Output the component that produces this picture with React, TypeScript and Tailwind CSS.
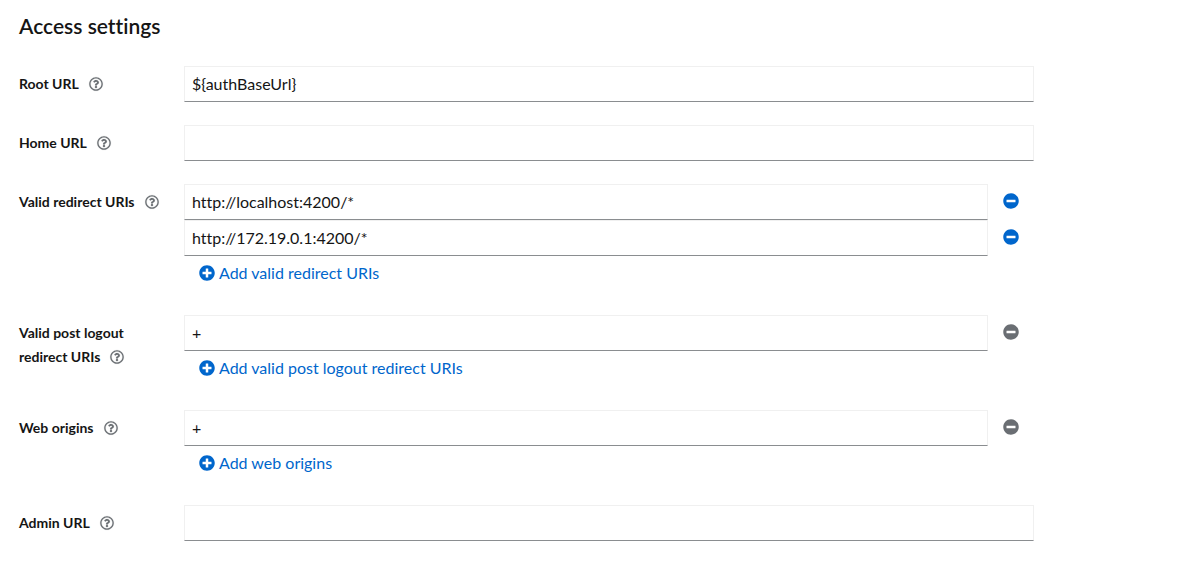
import { useState } from "react"
import { FaMinusCircle, FaPlusCircle, FaRegQuestionCircle } from "react-icons/fa"

const inputStyle =
    "block h-9 w-full min-w-0 border border-[#f0f0f0] border-b-[#8a8d90] bg-white px-[7px] pb-[2px] text-base text-[#151515] outline-none focus:border-b-[#0066cc]"

type FieldProps = {
    id: string
    label: string
    children: React.ReactNode
}

function Field({ id, label, children }: FieldProps) {
    return (
        <div className="grid grid-cols-[149px_1fr] gap-x-4">
            <div className="pt-[6px] text-sm leading-6 font-bold text-[#151515]">
                <label htmlFor={id}>{label}</label>
                <button type="button" aria-label={`More help for ${label}`} className="ml-[10px] inline-block align-[-2px] text-[#6a6e73]">
                    <FaRegQuestionCircle size={14} stroke="currentColor" strokeWidth={5} className="overflow-visible" />
                </button>
            </div>
            <div>{children}</div>
        </div>
    )
}

function TextField({ id, label, value = "" }: { id: string; label: string; value?: string }) {
    return (
        <Field id={id} label={label}>
            <input type="text" id={id} name={id} defaultValue={value} className={inputStyle} />
        </Field>
    )
}

function MultiLineField({ id, label, values, addLabel }: { id: string; label: string; values: string[]; addLabel: string }) {
    const [lines, setLines] = useState(values)
    const locked = lines.length === 1

    return (
        <Field id={id} label={label}>
            {lines.map((line, i) => (
                <div key={i} className="flex">
                    <input
                        type="text"
                        id={i === 0 ? id : `${id}-${i}`}
                        aria-label={i === 0 ? undefined : `${label} ${i + 1}`}
                        value={line}
                        onChange={(e) => setLines(lines.map((l, j) => (j === i ? e.target.value : l)))}
                        className={inputStyle}
                    />
                    <button
                        type="button"
                        aria-label="Remove"
                        disabled={locked}
                        onClick={() => setLines(lines.filter((_, j) => j !== i))}
                        className="flex h-[34px] w-[46px] shrink-0 items-center justify-center text-[#0066cc] disabled:text-[#6a6e73]"
                    >
                        <FaMinusCircle size={16} />
                    </button>
                </div>
            ))}
            <button
                type="button"
                onClick={() => setLines([...lines, ""])}
                className="flex h-9 items-center gap-1 px-[15px] pb-[2px] text-base text-[#0066cc]"
            >
                <FaPlusCircle size={16} />
                {addLabel}
            </button>
        </Field>
    )
}

export default function App() {
    return (
        <section className="bg-white pt-[11px] pr-[166px] pb-6 pl-[19px] font-['Lato','Liberation_Sans',sans-serif] [font-variant-ligatures:none]">
            <h1 className="mb-[25px] text-[21px] leading-[30px] font-semibold text-[#151515]">Access settings</h1>
            <form className="flex flex-col gap-[23px]">
                <TextField id="rootUrl" label="Root URL" value="${authBaseUrl}" />
                <TextField id="homeUrl" label="Home URL" />
                <MultiLineField
                    id="redirectUris"
                    label="Valid redirect URIs"
                    values={["http://localhost:4200/*", "http://172.19.0.1:4200/*"]}
                    addLabel="Add valid redirect URIs"
                />
                <MultiLineField
                    id="postLogoutRedirectUris"
                    label="Valid post logout redirect URIs"
                    values={["+"]}
                    addLabel="Add valid post logout redirect URIs"
                />
                <MultiLineField id="webOrigins" label="Web origins" values={["+"]} addLabel="Add web origins" />
                <TextField id="adminUrl" label="Admin URL" />
            </form>
        </section>
    )
}
